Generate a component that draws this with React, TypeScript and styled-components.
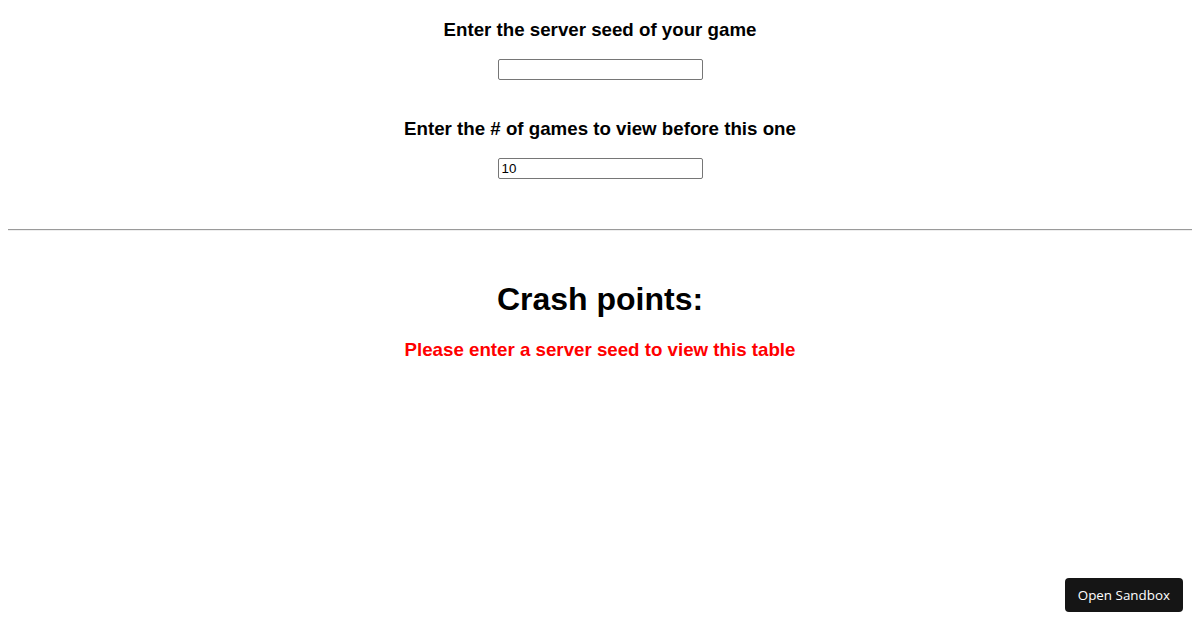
import React, { FC, useState } from 'react'
import styled, { createGlobalStyle } from 'styled-components'

const GlobalStyle = createGlobalStyle`
  html, body {
    margin: 0;
    padding: 0;
    background: #ffffff;
  }
  body {
    font-family: "Liberation Sans", Arial, sans-serif;
    color: #000000;
  }
`

const PAGE = styled.div`
  padding: 0 8px;
  text-align: center;
  display: flow-root;
`

const LABEL = styled.h3<{ $color?: string }>`
  font-size: 18.72px;
  font-weight: 700;
  line-height: 21.5px;
  margin: 18.72px 0;
  color: ${({ $color }) => $color || '#000000'};
`

const INPUT_ROW = styled.div<{ $after: number }>`
  height: 21px;
  margin: 18.72px 0 ${({ $after }) => $after}px;
  display: flex;
  justify-content: center;
`

const TEXT_INPUT = styled.input`
  box-sizing: border-box;
  width: 205px;
  height: 21px;
  margin: 0;
  padding: 1px 3px;
  border: 1px solid #767676;
  border-radius: 2px;
  font-family: "Liberation Sans", Arial, sans-serif;
  font-size: 13.33px;
  color: #000000;
  background: #ffffff;
  outline: none;
`

const DIVIDER = styled.hr`
  margin: 0 0 50px;
  height: 0;
  border: none;
  border-top: 1px solid #9a9a9a;
  border-bottom: 1px solid #eeeeee;
`

const TITLE = styled.h1`
  font-size: 32px;
  font-weight: 700;
  line-height: 36.8px;
  margin: 0 0 21.44px;
`

const SANDBOX_BUTTON = styled.button`
  position: fixed;
  right: 17px;
  bottom: 18px;
  height: 34px;
  padding: 0 13px;
  border: none;
  border-radius: 4px;
  background: #151515;
  color: #ffffff;
  font-family: "Open Sans", "Noto Sans", sans-serif;
  font-size: 13.4px;
  font-weight: 500;
  cursor: pointer;
`

const App: FC = () => {
  const [seed, setSeed] = useState('')
  const [count, setCount] = useState('10')

  return (
    <>
      <GlobalStyle />
      <PAGE>
        <LABEL>Enter the server seed of your game</LABEL>
        <INPUT_ROW $after={38}>
          <TEXT_INPUT type="text" value={seed} onChange={(e) => setSeed(e.target.value)} />
        </INPUT_ROW>
        <LABEL>Enter the # of games to view before this one</LABEL>
        <INPUT_ROW $after={50}>
          <TEXT_INPUT type="text" value={count} onChange={(e) => setCount(e.target.value)} />
        </INPUT_ROW>
        <DIVIDER />
        <TITLE>Crash points:</TITLE>
        {seed === '' ? (
          <LABEL $color="#ff0000">Please enter a server seed to view this table</LABEL>
        ) : (
          <></>
        )}
      </PAGE>
      <SANDBOX_BUTTON>Open Sandbox</SANDBOX_BUTTON>
    </>
  )
}

export default App
